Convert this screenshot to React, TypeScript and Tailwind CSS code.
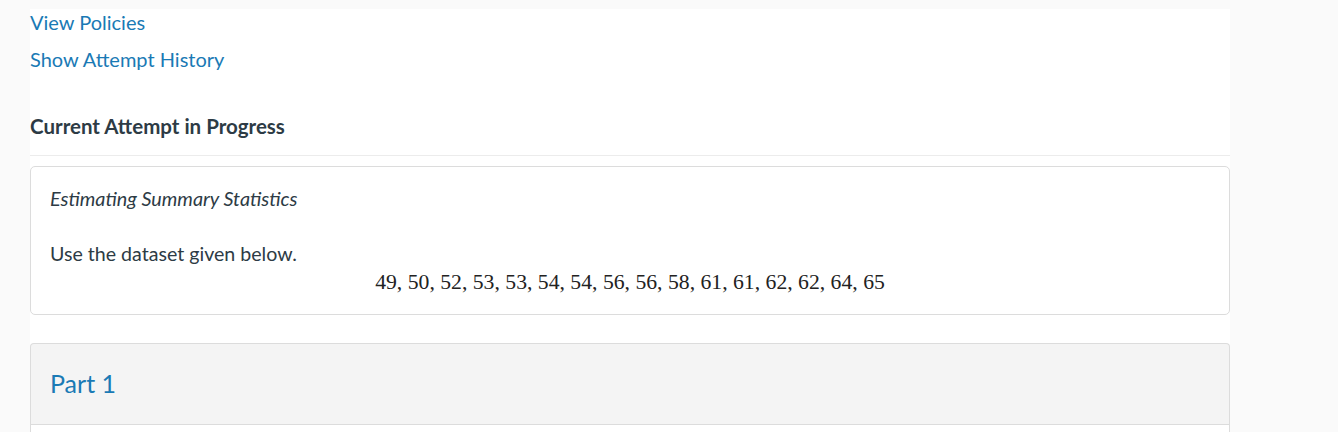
export default function App() {
  const data = [49, 50, 52, 53, 53, 54, 54, 56, 56, 58, 61, 61, 62, 62, 64, 65];

  return (
    <div className="min-h-[432px] bg-[#fafafa] pt-[9px] font-['Lato',sans-serif] text-[#2d3b45]">
      <div className="ml-[30px] w-[1200px] bg-white">
        <div className="flex flex-col gap-[15px] pt-[2px]">
          <a className="text-[20px] leading-[22px] text-[#1a7ab5]">View Policies</a>
          <a className="text-[20px] leading-[22px] text-[#1a7ab5]">Show Attempt History</a>
        </div>

        <h2 className="mt-[45px] text-[20.5px] font-bold leading-[22px]">Current Attempt in Progress</h2>
        <div className="mt-[18px] border-b border-[#ececec]" />

        <div className="mt-[10px] rounded-[5px] border border-[#dcdcdc] px-[19px] pt-[19px] pb-[19px]">
          <p className="text-[19.8px] italic leading-[24px]">Estimating Summary Statistics</p>
          <p className="mt-[32px] text-[19.6px] leading-[24px]">Use the dataset given below.</p>
          <p className="mt-[4px] text-center font-['Liberation_Serif',serif] text-[21.7px] leading-[25px] text-[#222]">
            {data.join(", ")}
          </p>
        </div>

        <div className="h-[28px]" />

        <div className="rounded-t-[4px] border border-b-0 border-[#dcdcdc] bg-[#f4f4f4]">
          <div className="flex h-[81px] items-center border-b border-[#dcdcdc] px-[19px]">
            <span className="text-[25px] text-[#1a7ab5]">Part 1</span>
          </div>
          <div className="h-[20px] bg-white" />
        </div>
      </div>
    </div>
  );
}
